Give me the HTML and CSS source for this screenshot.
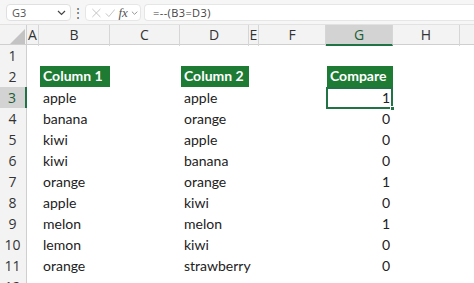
FILE: index.html
```html
<!DOCTYPE html>
<html>
<head>
<meta charset="utf-8">
<link rel="stylesheet" href="styles.css">
</head>
<body>
<div class="fbar">
  <div class="namebox"><span>G3</span>
    <svg class="chev" width="9" height="6" viewBox="0 0 9 6"><path d="M1 1 L4.5 4.5 L8 1" fill="none" stroke="#444" stroke-width="1.2"/></svg>
  </div>
  <div class="dots">⋮</div>
  <div class="fxbox">
    <svg width="12" height="12" viewBox="0 0 12 12"><path d="M1.5 1.5 L10.5 10.5 M10.5 1.5 L1.5 10.5" stroke="#c4c4c4" stroke-width="1.1" fill="none"/></svg>
    <svg width="12" height="12" viewBox="0 0 12 12"><path d="M1 6.5 L4.3 10 L11 2" stroke="#c4c4c4" stroke-width="1.1" fill="none"/></svg>
    <span class="fx">fx</span>
    <svg width="8" height="6" viewBox="0 0 8 6"><path d="M1 1.5 L4 4.5 L7 1.5" fill="none" stroke="#888" stroke-width="1"/></svg>
  </div>
  <div class="formula">=--(B3=D3)</div>
</div>
<div class="sheet">
  <div class="row head">
    <div class="corner"><svg width="15" height="15" viewBox="0 0 15 15"><path d="M15 0 L15 15 L0 15 Z" fill="#c3c3c3"/></svg></div>
    <div class="ch">A</div><div class="ch">B</div><div class="ch">C</div><div class="ch">D</div><div class="ch">E</div><div class="ch">F</div><div class="ch sel">G</div><div class="ch">H</div><div class="ch last"></div>
  </div>
  <div class="row"><div class="rh">1</div><div></div><div></div><div></div><div></div><div></div><div></div><div></div><div></div><div></div></div>
  <div class="row"><div class="rh">2</div><div></div><div class="c hdr">Column 1</div><div></div><div class="c hdr">Column 2</div><div></div><div></div><div class="c hdr">Compare</div><div></div><div></div></div>
  <div class="row"><div class="rh sel">3</div><div></div><div class="c">apple</div><div></div><div class="c">apple</div><div></div><div></div><div class="c num active">1<span class="handle"></span></div><div></div><div></div></div>
  <div class="row"><div class="rh">4</div><div></div><div class="c">banana</div><div></div><div class="c">orange</div><div></div><div></div><div class="c num">0</div><div></div><div></div></div>
  <div class="row"><div class="rh">5</div><div></div><div class="c">kiwi</div><div></div><div class="c">apple</div><div></div><div></div><div class="c num">0</div><div></div><div></div></div>
  <div class="row"><div class="rh">6</div><div></div><div class="c">kiwi</div><div></div><div class="c">banana</div><div></div><div></div><div class="c num">0</div><div></div><div></div></div>
  <div class="row"><div class="rh">7</div><div></div><div class="c">orange</div><div></div><div class="c">orange</div><div></div><div></div><div class="c num">1</div><div></div><div></div></div>
  <div class="row"><div class="rh">8</div><div></div><div class="c">apple</div><div></div><div class="c">kiwi</div><div></div><div></div><div class="c num">0</div><div></div><div></div></div>
  <div class="row"><div class="rh">9</div><div></div><div class="c">melon</div><div></div><div class="c">melon</div><div></div><div></div><div class="c num">1</div><div></div><div></div></div>
  <div class="row"><div class="rh">10</div><div></div><div class="c">lemon</div><div></div><div class="c">kiwi</div><div></div><div></div><div class="c num">0</div><div></div><div></div></div>
  <div class="row"><div class="rh">11</div><div></div><div class="c">orange</div><div></div><div class="c">strawberry</div><div></div><div></div><div class="c num">0</div><div></div><div></div></div>
  <div class="row"><div class="rh">12</div><div></div><div></div><div></div><div></div><div></div><div></div><div></div><div></div><div></div></div>
</div>
</body>
</html>
```

FILE: styles.css
```css
* { box-sizing: border-box; }
html, body { margin: 0; padding: 0; background: #fff; overflow: hidden; }
body { width: 474px; height: 283px; font-family: Lato, "Open Sans", sans-serif; color: #222; }

.fbar {
  height: 25px;
  background: #f6f6f6;
  display: flex;
  align-items: flex-start;
  padding: 4px 0 0 6px;
  border-bottom: 1px solid #e2e2e2;
  font-family: "Open Sans", sans-serif;
}
.namebox {
  width: 65px; height: 17px;
  background: #fff;
  border: 1px solid #e0e0e0;
  border-radius: 4px;
  display: flex; align-items: center; justify-content: space-between;
  padding: 0 4px 0 5px;
  font-size: 11px; color: #555;
}
.dots { width: 14px; text-align: center; font-size: 12px; line-height: 17px; color: #555; }
.fxbox {
  width: 56px; height: 17px;
  background: #fff;
  border: 1px solid #e6e6e6;
  border-radius: 4px;
  display: flex; align-items: center; gap: 3px;
  padding: 0 2px 0 5px;
}
.fx { font-family: "Liberation Serif", serif; font-style: italic; font-size: 13px; color: #555; line-height: 14px; }
.formula {
  flex: 1; height: 17px;
  margin-left: 3px;
  background: #fff;
  border: 1px solid #e6e6e6;
  border-right: none;
  border-radius: 4px 0 0 4px;
  font-size: 11px; color: #444; line-height: 15px;
  letter-spacing: 0.4px;
  padding-left: 8px;
}

.row {
  display: grid;
  grid-template-columns: 27px 12px 71px 70px 69px 10px 67px 67px 67px 1fr;
  height: 21px;
}
.row.head { height: 20px; background: #f3f3f3; border-bottom: 1px solid #cfcfcf; }
.corner { border-right: 1px solid #cfcfcf; display: flex; align-items: flex-end; justify-content: flex-end; padding: 0 1px 2px 0; }
.ch {
  border-right: 1px solid #d6d6d6;
  text-align: center;
  font-size: 14px; line-height: 20px; color: #333;
  font-family: "Open Sans", sans-serif;
}
.ch.last { border-right: none; }
.ch.sel { background: #d3d3d3; border-bottom: 2px solid #217346; color: #1d5e38; line-height: 19px; }

.rh {
  background: #f3f3f3;
  border-right: 1px solid #cfcfcf;
  border-bottom: 1px solid #dcdcdc;
  text-align: center;
  font-size: 14px; line-height: 21px; color: #333;
  font-family: "Open Sans", sans-serif;
  padding-right: 1px;
}
.rh.sel { background: #d3d3d3; border-right: 2px solid #217346; color: #1d5e38; }

.c {
  font-size: 14px; line-height: 21px;
  padding: 0 3px 0 4px;
  white-space: nowrap;
}
.hdr {
  background: #1e7b34;
  color: #fff;
  font-weight: bold;
  padding-left: 3px;
  margin: 0 0 1px 1px;
  line-height: 20px;
}
.num { text-align: right; padding-right: 3px; }
.active {
  position: relative;
  border: 2px solid #217346;
  line-height: 17px;
  padding-right: 1px;
}
.handle {
  position: absolute; right: -4px; bottom: -4px;
  width: 5px; height: 5px;
  background: #217346;
  border: 1px solid #fff;
}
```
